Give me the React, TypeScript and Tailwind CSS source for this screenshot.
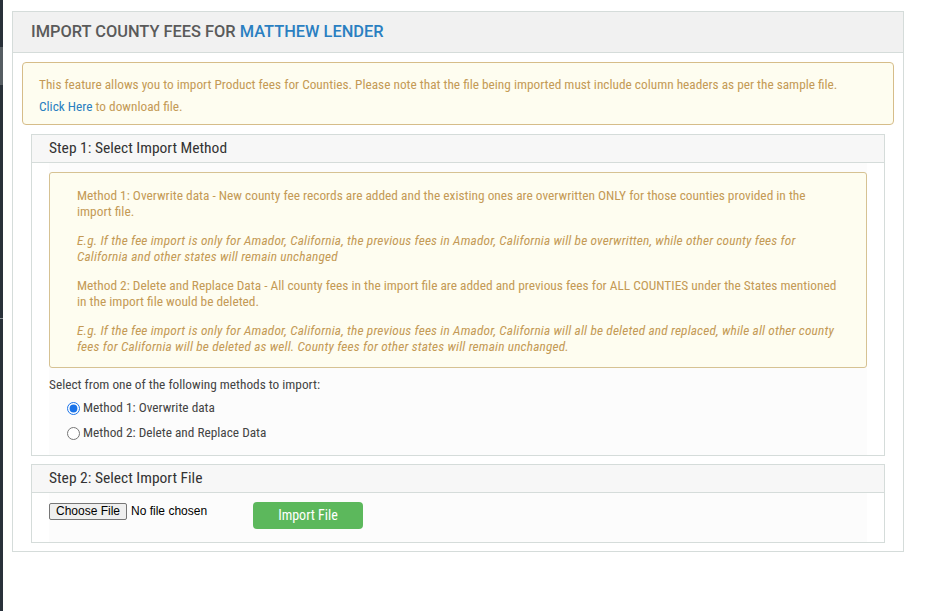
import React from 'react';

function StepPanel({ title, children }: { title: string; children: React.ReactNode }) {
  return (
    <div className="border border-[#d5dcda] bg-white">
      <div className="h-[28px] flex items-center px-[17px] bg-[#f7f7f7] border-b border-[#d5dcda] text-[15.5px] text-[#333]">
        {title}
      </div>
      <div className="px-[17px]">{children}</div>
    </div>
  );
}

export default function App() {
  return (
    <div className="flex min-h-[611px] bg-white font-['Roboto','Liberation_Sans',sans-serif] [font-stretch:condensed]">
      {/* edge of the sidebar behind */}
      <div className="w-[3px] flex flex-col bg-[#29313a]">
        <div className="h-[47px]" />
        <div className="h-[38px] bg-[#565d63]" />
        <div className="h-[233px]" />
        <div className="h-px bg-[#8a9096]" />
      </div>

      <div className="flex-1 pl-[9px] pr-[44px] pt-[11px]">
        <div className="border border-[#d5dcda] bg-white pb-[8px]">
          <div className="h-[41px] flex items-center px-[18px] bg-[#f1f1f1] border-b border-[#d5dcda] text-[16.4px] font-medium [font-stretch:normal] uppercase text-[#5a5a5a]">
            Import County Fees for&nbsp;<span className="text-[#2a7fc1]">Matthew Lender</span>
          </div>

          <div className="px-[9px] pt-[9px]">
            <div className="rounded-[4px] border border-[#d6bd89] bg-[#fefdf0] px-[16px] pt-[11px] pb-[6px] text-[13.3px] leading-[22px] text-[#c49a55]">
              <div>
                This feature allows you to import Product fees for Counties. Please note that the file being imported must include column headers as per the sample file.
              </div>
              <div>
                <a href="#" className="text-[#2a7fc1]">Click Here</a> to download file.
              </div>
            </div>

            <div className="px-[9px] pt-[9px] flex flex-col gap-[8px]">
              <StepPanel title="Step 1: Select Import Method">
                <div className="bg-[#fcfcfc] pt-[9px] pb-[14px]">
                  <div className="rounded-[3px] border border-[#d6c293] bg-[#fefdf0] pl-[27px] pr-[26px] pt-[15px] pb-[13px] text-[13.35px] leading-[15.5px] text-[#c49a55]">
                    <p className="mb-[14px]">
                      Method 1: Overwrite data - New county fee records are added and the existing ones are overwritten ONLY for those counties provided in the import file.
                    </p>
                    <p className="mb-[14px] italic tracking-[0.15px]">
                      E.g. If the fee import is only for Amador, California, the previous fees in Amador, California will be overwritten, while other county fees for California and other states will remain unchanged
                    </p>
                    <p className="mb-[14px]">
                      Method 2: Delete and Replace Data - All county fees in the import file are added and previous fees for ALL COUNTIES under the States mentioned in the import file would be deleted.
                    </p>
                    <p className="italic tracking-[0.15px]">
                      E.g. If the fee import is only for Amador, California, the previous fees in Amador, California will all be deleted and replaced, while all other county fees for California will be deleted as well. County fees for other states will remain unchanged.
                    </p>
                  </div>

                  <div className="mt-[9px] text-[13.3px] leading-[16px] text-[#444]">
                    Select from one of the following methods to import:
                  </div>
                  <div className="pl-[18px] mt-[7px] flex flex-col gap-[9px] text-[13.3px] leading-[16px] text-[#444]">
                    <label className="flex items-center gap-[3px]">
                      <input type="radio" name="method" defaultChecked className="m-0 w-[13px] h-[13px] accent-[#1a73e8]" />
                      Method 1: Overwrite data
                    </label>
                    <label className="flex items-center gap-[3px]">
                      <input type="radio" name="method" className="m-0 w-[13px] h-[13px]" />
                      Method 2: Delete and Replace Data
                    </label>
                  </div>
                </div>
              </StepPanel>

              <StepPanel title="Step 2: Select Import File">
                <div className="bg-[#fcfcfc] pt-[9px] pb-[13px] flex items-start">
                  <div className="w-[204px] flex items-center font-['Liberation_Sans',sans-serif] [font-stretch:normal] text-[12px] text-black">
                    <span className="h-[17px] px-[6px] flex items-center bg-[#efefef] border border-[#767676] rounded-[2px]">Choose File</span>
                    <span className="ml-[4px]">No file chosen</span>
                  </div>
                  <button className="w-[110px] h-[27px] rounded-[4px] bg-[#5cb85c] text-white text-[14px]">
                    Import File
                  </button>
                </div>
              </StepPanel>
            </div>
          </div>
        </div>
      </div>
    </div>
  );
}
